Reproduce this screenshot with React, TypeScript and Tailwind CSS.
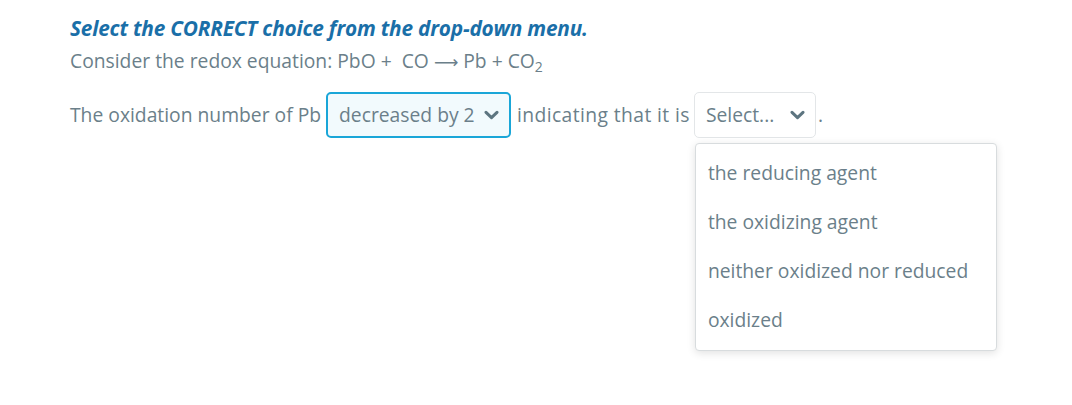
import React from 'react';

const options = [
  "the reducing agent",
  "the oxidizing agent",
  "neither oxidized nor reduced",
  "oxidized",
];

const Chevron = () => (
  <svg width="15" height="10" viewBox="0 0 15 10" className="ml-2 shrink-0">
    <path d="M2 2.3 L7.5 7.6 L13 2.3" fill="none" stroke="#5d7580" strokeWidth="3" strokeLinecap="round" strokeLinejoin="round" />
  </svg>
);

const App = () => {
  return (
    <div className="min-h-[405px] bg-white pl-[70px] pt-[14px] text-[#6b7f8a]" style={{ fontFamily: '"Open Sans", sans-serif' }}>
      <h2 className="text-[20.8px] font-bold italic text-[#1a6fa8] leading-[28px] tracking-[-0.2px]">
        Select the CORRECT choice from the drop-down menu.
      </h2>
      <p className="mt-[6px] text-[19.3px] leading-[26px]">
        Consider the redox equation: PbO +&nbsp; CO <span style={{ fontFamily: '"DejaVu Sans", sans-serif' }} className="text-[17px]">⟶</span> Pb + CO<sub className="text-[14px]">2</sub>
      </p>
      <div className="mt-[17px] flex items-center text-[19.3px]">
        <span>The oxidation number of Pb</span>
        <div className="ml-[5px] flex h-[46px] w-[185px] items-center rounded-[5px] border-2 border-[#1aa6d8] bg-[#f2fafd] pl-[11px] pr-[10px]">
          <span className="flex-1 whitespace-nowrap">decreased by 2</span>
          <Chevron />
        </div>
        <span className="ml-[6px] tracking-[0.4px]">indicating that it is</span>
        <div className="relative ml-[4px]">
          <div className="flex h-[46px] w-[122px] items-center rounded-[5px] border border-[#e3e6e8] bg-white pl-[11px] pr-[10px]">
            <span className="flex-1">Select...</span>
            <Chevron />
          </div>
          <div className="absolute left-[1px] top-[51px] w-[302px] rounded-[4px] border border-[#d8dcde] bg-white py-[5px] shadow-[0_2px_8px_rgba(0,0,0,0.12)]">
            {options.map((o) => (
              <div key={o} className="flex h-[49px] items-center px-[12px] whitespace-nowrap">
                {o}
              </div>
            ))}
          </div>
        </div>
        <span className="ml-[2px]">.</span>
      </div>
    </div>
  );
};

export default App;
